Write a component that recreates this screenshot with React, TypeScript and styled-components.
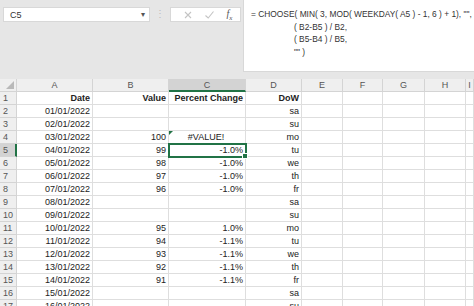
import React from 'react';
import styled, { createGlobalStyle } from 'styled-components';

const GlobalStyle = createGlobalStyle`
  body {
    margin: 0;
    background: #e6e6e6;
    font-family: 'Liberation Sans', Arial, sans-serif;
    overflow: hidden;
  }
`;

const COLS = ['A', 'B', 'C', 'D', 'E', 'F', 'G', 'H', 'I'];
const WIDTHS = '17px 76px 76px 77px 56px 41px 40px 42px 41px 1fr';

type Row = [string, string, string, string, string];

const rows: Row[] = [
  ['1', 'Date', 'Value', 'Percent Change', 'DoW'],
  ['2', '01/01/2022', '', '', 'sa'],
  ['3', '02/01/2022', '', '', 'su'],
  ['4', '03/01/2022', '100', '#VALUE!', 'mo'],
  ['5', '04/01/2022', '99', '-1.0%', 'tu'],
  ['6', '05/01/2022', '98', '-1.0%', 'we'],
  ['7', '06/01/2022', '97', '-1.0%', 'th'],
  ['8', '07/01/2022', '96', '-1.0%', 'fr'],
  ['9', '08/01/2022', '', '', 'sa'],
  ['10', '09/01/2022', '', '', 'su'],
  ['11', '10/01/2022', '95', '1.0%', 'mo'],
  ['12', '11/01/2022', '94', '-1.1%', 'tu'],
  ['13', '12/01/2022', '93', '-1.1%', 'we'],
  ['14', '13/01/2022', '92', '-1.1%', 'th'],
  ['15', '14/01/2022', '91', '-1.1%', 'fr'],
  ['16', '15/01/2022', '', '', 'sa'],
  ['17', '16/01/2022', '', '', 'su'],
];

export default function App() {
  return (
    <>
      <GlobalStyle />
      <TopBar>
        <NameBox>
          C5
          <Caret>▾</Caret>
        </NameBox>
        <Dots>⋮</Dots>
        <FxBox>
          <svg width="10" height="10" viewBox="0 0 10 10">
            <path d="M2 2 L8 8 M8 2 L2 8" stroke="#c4c4c4" strokeWidth="1.1" fill="none" />
          </svg>
          <svg width="11" height="10" viewBox="0 0 11 10">
            <path d="M1.5 5.5 L4.2 8 L9.5 1.5" stroke="#c4c4c4" strokeWidth="1.1" fill="none" />
          </svg>
          <Fx>
            f<sub>x</sub>
          </Fx>
        </FxBox>
        <FormulaBox>
          <FormulaLine>= CHOOSE( MIN( 3, MOD( WEEKDAY( A5 ) - 1, 6 ) + 1), "",</FormulaLine>
          <FormulaLine indent>( B2-B5 ) / B2,</FormulaLine>
          <FormulaLine indent>( B5-B4 ) / B5,</FormulaLine>
          <FormulaLine indent>"" )</FormulaLine>
        </FormulaBox>
      </TopBar>
      <Sheet>
        <Corner>
          <svg width="8" height="8" viewBox="0 0 8 8">
            <path d="M8 0 L8 8 L0 8 Z" fill="#b9b9b9" />
          </svg>
        </Corner>
        {COLS.map((c) => (
          <ColHead key={c} active={c === 'C'}>
            {c}
          </ColHead>
        ))}
        {rows.map(([n, a, b, c, d]) => (
          <React.Fragment key={n}>
            <RowHead active={n === '5'}>{n}</RowHead>
            <Cell bold={n === '1'}>{a}</Cell>
            <Cell bold={n === '1'}>{b}</Cell>
            <Cell bold={n === '1'} center={c === '#VALUE!'} selected={n === '5'} error={n === '4'}>
              {c}
            </Cell>
            <Cell bold={n === '1'}>{d}</Cell>
            <Cell />
            <Cell />
            <Cell />
            <Cell />
            <Cell />
          </React.Fragment>
        ))}
      </Sheet>
    </>
  );
}

const TopBar = styled.div`
  display: flex;
  align-items: flex-start;
  height: 79px;
  padding-left: 3px;
`;

const NameBox = styled.div`
  margin-top: 7px;
  width: 147px;
  height: 15px;
  box-sizing: border-box;
  background: #fff;
  border: 1px solid #d8d8d8;
  display: flex;
  align-items: center;
  justify-content: space-between;
  padding: 0 4px 0 6px;
  font-size: 9px;
  color: #333;
`;

const Caret = styled.span`
  font-size: 8px;
  color: #555;
`;

const Dots = styled.div`
  width: 20px;
  margin-top: 8px;
  text-align: center;
  color: #bdbdbd;
  font-size: 10px;
`;

const FxBox = styled.div`
  margin-top: 7px;
  width: 71px;
  height: 15px;
  box-sizing: border-box;
  background: #fff;
  border: 1px solid #d8d8d8;
  display: flex;
  align-items: center;
  justify-content: space-around;
  padding: 0 2px 0 6px;
`;

const Fx = styled.span`
  font-family: 'Liberation Serif', serif;
  font-style: italic;
  font-size: 10px;
  color: #555;
  sub {
    font-size: 7px;
  }
`;

const FormulaBox = styled.div`
  margin-left: 2px;
  flex: 1;
  height: 72px;
  box-sizing: border-box;
  background: #fff;
  border-left: 1px solid #d8d8d8;
  border-bottom: 1px solid #d8d8d8;
  padding: 8px 0 0 7px;
  font-size: 8.4px;
  color: #333;
  white-space: nowrap;
  overflow: hidden;
`;

const FormulaLine = styled.div<{ indent?: boolean }>`
  height: 12.7px;
  line-height: 12.7px;
  padding-left: ${(p) => (p.indent ? '43px' : '0')};
`;

const Sheet = styled.div`
  display: grid;
  grid-template-columns: ${WIDTHS};
  grid-auto-rows: 13px;
  background: #fff;
  font-size: 9px;
  color: #222;
`;

const HeadBase = styled.div`
  background: #efefef;
  color: #555;
  box-sizing: border-box;
  border-right: 1px solid #d4d4d4;
  border-bottom: 1px solid #d4d4d4;
  display: flex;
  align-items: center;
  white-space: nowrap;
`;

const Corner = styled(HeadBase)`
  justify-content: flex-end;
  align-items: flex-end;
  padding: 0 2px 2px 0;
`;

const ColHead = styled(HeadBase)<{ active?: boolean }>`
  justify-content: center;
  background: ${(p) => (p.active ? '#d3d3d3' : '#efefef')};
  border-bottom: ${(p) => (p.active ? '2px solid #217346' : '1px solid #d4d4d4')};
`;

const RowHead = styled(HeadBase)<{ active?: boolean }>`
  padding-left: 3px;
  background: ${(p) => (p.active ? '#d3d3d3' : '#efefef')};
  border-right: ${(p) => (p.active ? '2px solid #217346' : '1px solid #d4d4d4')};
`;

const Cell = styled.div<{ bold?: boolean; center?: boolean; selected?: boolean; error?: boolean }>`
  position: relative;
  box-sizing: border-box;
  border-right: 1px solid #dedede;
  border-bottom: 1px solid #dedede;
  display: flex;
  align-items: center;
  justify-content: ${(p) => (p.center ? 'center' : 'flex-end')};
  padding-right: 2px;
  white-space: nowrap;
  font-weight: ${(p) => (p.bold ? 700 : 400)};
  ${(p) =>
    p.selected &&
    `
    outline: 2px solid #217346;
    outline-offset: -1px;
    z-index: 1;
    &::after {
      content: '';
      position: absolute;
      right: -3px;
      bottom: -3px;
      width: 4px;
      height: 4px;
      background: #217346;
      border: 1px solid #fff;
    }
  `}
  ${(p) =>
    p.error &&
    `
    &::before {
      content: '';
      position: absolute;
      left: 0;
      top: 0;
      border-top: 4px solid #217346;
      border-right: 4px solid transparent;
    }
  `}
`;
